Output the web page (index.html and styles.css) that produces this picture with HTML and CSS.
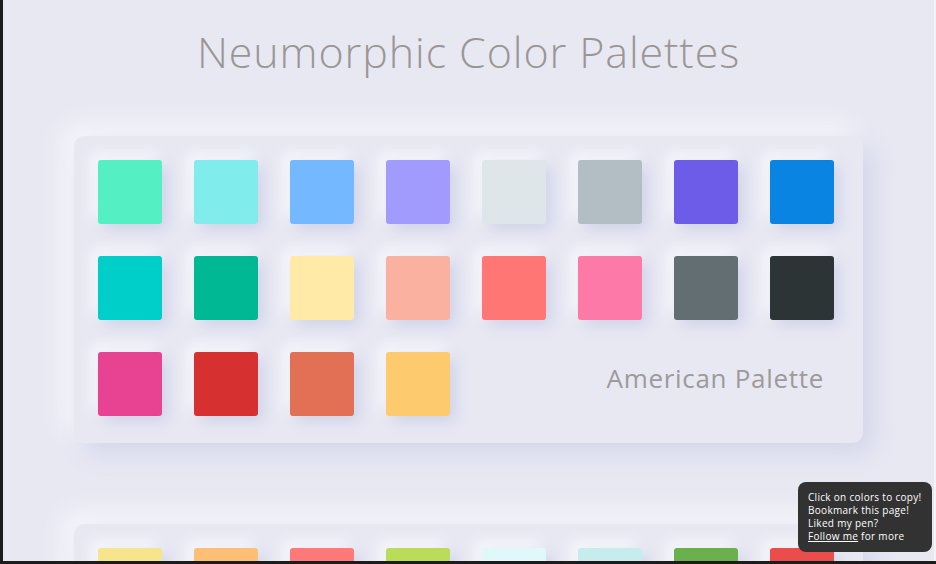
FILE: index.html
```html
<!DOCTYPE html>
<html lang="en">
<head>
    <meta charset="UTF-8">
    <meta name="viewport" content="width=device-width, initial-scale=1.0">
    <title>Neumorphic Color Palettes</title>
    <link rel="stylesheet" href="styles.css">
</head>
<body>
    <div class="frame">
        <h1>Neumorphic Color Palettes</h1>

        <div class="palette">
            <div class="swatch" style="background: #55efc4"></div>
            <div class="swatch" style="background: #81ecec"></div>
            <div class="swatch" style="background: #74b9ff"></div>
            <div class="swatch" style="background: #a29bfe"></div>
            <div class="swatch" style="background: #dfe6e9"></div>
            <div class="swatch" style="background: #b2bec3"></div>
            <div class="swatch" style="background: #6c5ce7"></div>
            <div class="swatch" style="background: #0984e3"></div>
            <div class="swatch" style="background: #00cec9"></div>
            <div class="swatch" style="background: #00b894"></div>
            <div class="swatch" style="background: #ffeaa7"></div>
            <div class="swatch" style="background: #fab1a0"></div>
            <div class="swatch" style="background: #ff7675"></div>
            <div class="swatch" style="background: #fd79a8"></div>
            <div class="swatch" style="background: #636e72"></div>
            <div class="swatch" style="background: #2d3436"></div>
            <div class="swatch" style="background: #e84393"></div>
            <div class="swatch" style="background: #d63031"></div>
            <div class="swatch" style="background: #e17055"></div>
            <div class="swatch" style="background: #fdcb6e"></div>
            <div class="palette-name">American Palette</div>
        </div>

        <div class="palette">
            <div class="swatch" style="background: #f6e58d"></div>
            <div class="swatch" style="background: #ffbe76"></div>
            <div class="swatch" style="background: #ff7979"></div>
            <div class="swatch" style="background: #badc58"></div>
            <div class="swatch" style="background: #dff9fb"></div>
            <div class="swatch" style="background: #c7ecee"></div>
            <div class="swatch" style="background: #6ab04c"></div>
            <div class="swatch" style="background: #eb4d4b"></div>
            <div class="swatch" style="background: #f9ca24"></div>
            <div class="swatch" style="background: #f0932b"></div>
            <div class="swatch" style="background: #eb4d4b"></div>
            <div class="swatch" style="background: #6ab04c"></div>
            <div class="swatch" style="background: #7ed6df"></div>
            <div class="swatch" style="background: #e056fd"></div>
            <div class="swatch" style="background: #686de0"></div>
            <div class="swatch" style="background: #30336b"></div>
        </div>

        <div class="note">
            Click on colors to copy!<br>
            Bookmark this page!<br>
            Liked my pen?<br>
            <a href="#">Follow me</a> for more
        </div>
    </div>
</body>
</html>
```

FILE: styles.css
```css
html, body {
    margin: 0;
    padding: 0;
    background-color: #1c1c1c;
}
body {
    font-family: "Open Sans", Arial, sans-serif;
}
.frame {
    position: relative;
    height: 561px;
    margin-left: 3px;
    overflow: hidden;
    background-color: #e8e8f3;
    border-right: 2px solid #f3f3f7;
}
h1 {
    margin: 0;
    padding-top: 22px;
    text-align: center;
    font-size: 43px;
    font-weight: 300;
    color: #9b9696;
    letter-spacing: 0.9px;
}
.palette {
    display: grid;
    grid-template-columns: repeat(8, 64px);
    grid-auto-rows: 64px;
    gap: 32px;
    width: 741px;
    margin: 55px auto 81px;
    padding: 24px 24px 27px 24px;
    border-radius: 10px;
    background-color: #e8e8f3;
    box-shadow: 10px 10px 24px #d3d6ea, -10px -10px 24px #f8f8fc;
}
.swatch {
    border-radius: 3px;
    box-shadow: 6px 6px 14px #d1d4ea, -6px -6px 14px #f9f9fd;
    cursor: pointer;
}
.palette-name {
    grid-column: 5 / 9;
    align-self: center;
    margin-bottom: 12px;
    text-align: right;
    padding-right: 10px;
    font-size: 26px;
    font-weight: 400;
    letter-spacing: 0.7px;
    color: #9d9a9c;
}
.note {
    position: absolute;
    right: 2px;
    bottom: 9px;
    width: 114px;
    padding: 9px 10px;
    border-radius: 8px;
    background-color: #323232;
    color: #fff;
    font-size: 10px;
    line-height: 13px;
    letter-spacing: 0.3px;
}
.note a {
    color: #fff;
}
```
